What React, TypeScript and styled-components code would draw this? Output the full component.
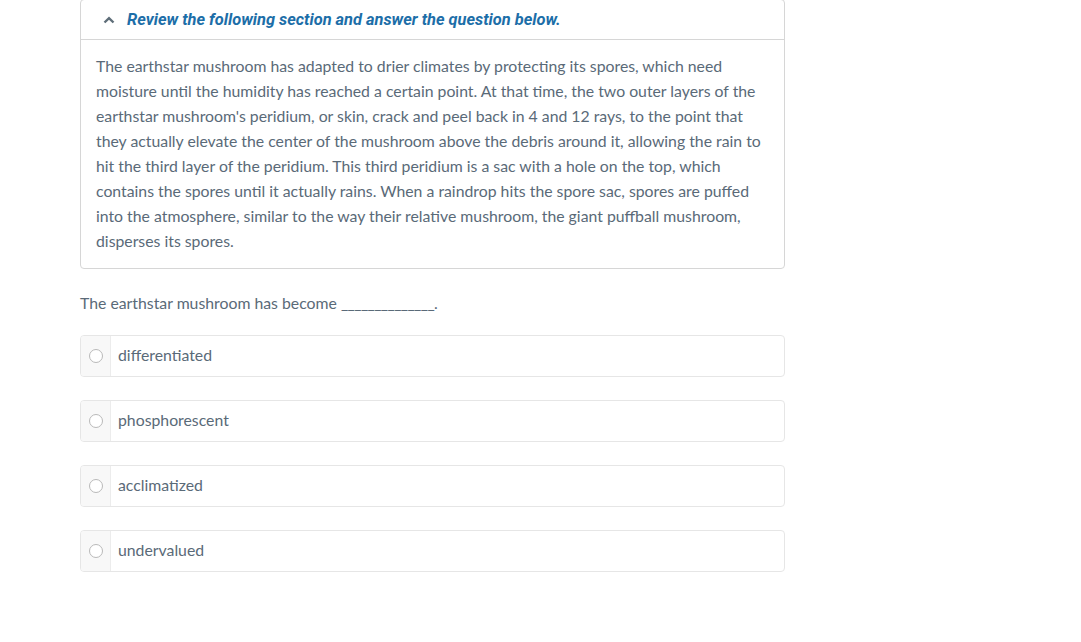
import React, { useState } from "react";
import styled, { createGlobalStyle } from "styled-components";

const GlobalStyle = createGlobalStyle`
  body {
    margin: 0;
    background: #ffffff;
    font-family: "Lato", "Roboto", sans-serif;
  }
`;

const Page = styled.div`
  width: 705px;
  padding-left: 80px;
  display: flex;
  flex-direction: column;
`;

const Panel = styled.section`
  margin-top: -1px;
  border: 1px solid #d6d6d6;
  border-radius: 4px;
  background: #ffffff;
`;

const PanelHeader = styled.button`
  display: flex;
  align-items: center;
  gap: 12px;
  width: 100%;
  height: 40px;
  padding: 0 0 0 22px;
  border: none;
  border-bottom: 1px solid #d6d6d6;
  background: transparent;
  cursor: pointer;
  font-family: "Roboto", "Lato", sans-serif;
  font-size: 16.4px;
  font-weight: 700;
  font-style: italic;
  color: #1c6ea8;
`;

const Caret = styled.svg`
  width: 12px;
  height: 8px;
  flex-shrink: 0;
`;

const Passage = styled.p`
  margin: 0;
  padding: 13px 16px 15px 15px;
  font-size: 15.8px;
  line-height: 25px;
  color: #5a6a78;
`;

const Question = styled.p`
  margin: 21px 0 20px;
  font-size: 15.8px;
  line-height: 25px;
  color: #5a6a78;
`;

const Blank = styled.span`
  letter-spacing: -0.6px;
`;

const Options = styled.div`
  display: flex;
  flex-direction: column;
  gap: 23px;
`;

const Option = styled.label`
  display: flex;
  height: 40px;
  border: 1px solid #e6e6e6;
  border-radius: 4px;
  cursor: pointer;
  overflow: hidden;
`;

const RadioCell = styled.span`
  width: 29px;
  display: flex;
  align-items: center;
  justify-content: center;
  background: #f8f8f8;
  border-right: 1px solid #ececec;
`;

const Radio = styled.span<{ $checked: boolean }>`
  width: 12px;
  height: 12px;
  border-radius: 50%;
  border: 1px solid #b9b9b9;
  background: ${(p) => (p.$checked ? "#1c6ea8" : "#ffffff")};
  box-shadow: ${(p) => (p.$checked ? "inset 0 0 0 3px #ffffff" : "none")};
`;

const OptionText = styled.span`
  display: flex;
  align-items: center;
  padding: 0 0 3px 7px;
  font-size: 15.8px;
  color: #5a6a78;
`;

const passageLines = [
  "The earthstar mushroom has adapted to drier climates by protecting its spores, which need",
  "moisture until the humidity has reached a certain point. At that time, the two outer layers of the",
  "earthstar mushroom's peridium, or skin, crack and peel back in 4 and 12 rays, to the point that",
  "they actually elevate the center of the mushroom above the debris around it, allowing the rain to",
  "hit the third layer of the peridium. This third peridium is a sac with a hole on the top, which",
  "contains the spores until it actually rains. When a raindrop hits the spore sac, spores are puffed",
  "into the atmosphere, similar to the way their relative mushroom, the giant puffball mushroom,",
  "disperses its spores.",
];

const choices = ["differentiated", "phosphorescent", "acclimatized", "undervalued"];

const App: React.FC = () => {
  const [open, setOpen] = useState(true);
  const [selected, setSelected] = useState<string | null>(null);

  return (
    <>
      <GlobalStyle />
      <Page>
        <Panel>
          <PanelHeader onClick={() => setOpen(!open)}>
            <Caret viewBox="0 0 12 8">
              <path
                d={open ? "M1.5 6.5 L6 2.2 L10.5 6.5" : "M1.5 1.5 L6 5.8 L10.5 1.5"}
                fill="none"
                stroke="#5f6e79"
                strokeWidth="2.4"
              />
            </Caret>
            Review the following section and answer the question below.
          </PanelHeader>
          {open && (
            <Passage>
              {passageLines.map((line, i) => (
                <React.Fragment key={i}>
                  {line}
                  {i < passageLines.length - 1 && <br />}
                </React.Fragment>
              ))}
            </Passage>
          )}
        </Panel>
        <Question>
          The earthstar mushroom has become <Blank>______________</Blank>.
        </Question>
        <Options>
          {choices.map((choice) => (
            <Option key={choice} onClick={() => setSelected(choice)}>
              <RadioCell>
                <Radio $checked={selected === choice} />
              </RadioCell>
              <OptionText>{choice}</OptionText>
            </Option>
          ))}
        </Options>
      </Page>
    </>
  );
};

export default App;
